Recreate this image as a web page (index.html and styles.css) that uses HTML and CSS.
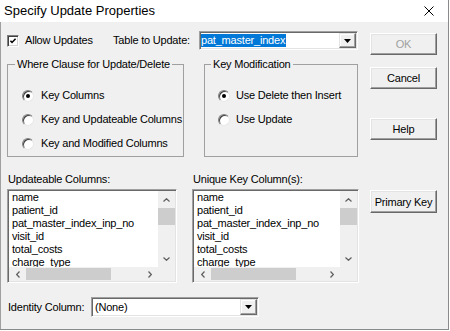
FILE: index.html
```html
<!DOCTYPE html>
<html>
<head>
<meta charset="utf-8">
<link rel="stylesheet" href="styles.css">
</head>
<body>
<div class="window">
  <div class="titlebar">
    <span class="title">Specify Update Properties</span>
    <svg class="close" viewBox="0 0 10 10"><path d="M0.5 0.5 L9.5 9.5 M9.5 0.5 L0.5 9.5" stroke="#000" stroke-width="1" fill="none"/></svg>
  </div>
  <div class="client">
    <div class="main">
      <div class="row1">
        <label class="check">
          <span class="cbox"><svg viewBox="0 0 10 10"><polyline points="1.8,4.6 3.8,6.8 8.2,2.2" stroke="#000" stroke-width="1.9" fill="none"/></svg></span>
          <span>Allow Updates</span>
        </label>
        <span class="tbl-lbl">Table to Update:</span>
        <div class="combo combo-table">
          <span class="combo-text"><span class="sel">pat_master_index</span></span>
          <span class="dd-btn"><svg viewBox="0 0 7 4"><polygon points="0,0 7,0 3.5,4" fill="#000"/></svg></span>
        </div>
      </div>

      <div class="groups">
        <fieldset class="group g1">
          <legend>Where Clause for Update/Delete</legend>
          <div class="radios">
            <div class="radio-row"><span class="radio on"></span><span>Key Columns</span></div>
            <div class="radio-row"><span class="radio"></span><span>Key and Updateable Columns</span></div>
            <div class="radio-row"><span class="radio"></span><span>Key and Modified Columns</span></div>
          </div>
        </fieldset>
        <fieldset class="group g2">
          <legend>Key Modification</legend>
          <div class="radios">
            <div class="radio-row"><span class="radio on"></span><span>Use Delete then Insert</span></div>
            <div class="radio-row"><span class="radio"></span><span>Use Update</span></div>
          </div>
        </fieldset>
      </div>

      <div class="lists">
        <div class="listcol l1">
          <div class="list-lbl">Updateable Columns:</div>
          <div class="listbox">
            <div class="items">
              <div>name</div><div>patient_id</div><div>pat_master_index_inp_no</div><div>visit_id</div><div>total_costs</div><div>charge_type</div>
            </div>
            <div class="vscroll">
              <span class="sbtn"><svg viewBox="0 0 7 4"><polyline points="0.5,3.5 3.5,0.7 6.5,3.5" stroke="#606060" stroke-width="1.2" fill="none"/></svg></span>
              <span class="vthumb"></span>
              <span class="vtrack"></span>
              <span class="sbtn"><svg viewBox="0 0 7 4"><polyline points="0.5,0.5 3.5,3.3 6.5,0.5" stroke="#606060" stroke-width="1.2" fill="none"/></svg></span>
            </div>
            <div class="hscroll">
              <span class="sbtn"><svg viewBox="0 0 4 7"><polyline points="3.5,0.5 0.7,3.5 3.5,6.5" stroke="#606060" stroke-width="1.2" fill="none"/></svg></span>
              <span class="hthumb"></span>
              <span class="htrack"></span>
              <span class="sbtn"><svg viewBox="0 0 4 7"><polyline points="0.5,0.5 3.3,3.5 0.5,6.5" stroke="#606060" stroke-width="1.2" fill="none"/></svg></span>
            </div>
            <div class="corner"></div>
          </div>
        </div>
        <div class="listcol l2">
          <div class="list-lbl">Unique Key Column(s):</div>
          <div class="listbox">
            <div class="items">
              <div>name</div><div>patient_id</div><div>pat_master_index_inp_no</div><div>visit_id</div><div>total_costs</div><div>charge_type</div>
            </div>
            <div class="vscroll">
              <span class="sbtn"><svg viewBox="0 0 7 4"><polyline points="0.5,3.5 3.5,0.7 6.5,3.5" stroke="#606060" stroke-width="1.2" fill="none"/></svg></span>
              <span class="vthumb"></span>
              <span class="vtrack"></span>
              <span class="sbtn"><svg viewBox="0 0 7 4"><polyline points="0.5,0.5 3.5,3.3 6.5,0.5" stroke="#606060" stroke-width="1.2" fill="none"/></svg></span>
            </div>
            <div class="hscroll">
              <span class="sbtn"><svg viewBox="0 0 4 7"><polyline points="3.5,0.5 0.7,3.5 3.5,6.5" stroke="#606060" stroke-width="1.2" fill="none"/></svg></span>
              <span class="hthumb"></span>
              <span class="htrack"></span>
              <span class="sbtn"><svg viewBox="0 0 4 7"><polyline points="0.5,0.5 3.3,3.5 0.5,6.5" stroke="#606060" stroke-width="1.2" fill="none"/></svg></span>
            </div>
            <div class="corner"></div>
          </div>
        </div>
      </div>

      <div class="identity">
        <span class="id-lbl">Identity Column:</span>
        <div class="combo combo-id">
          <span class="combo-text"><span class="plain">(None)</span></span>
          <span class="dd-btn"><svg viewBox="0 0 7 4"><polygon points="0,0 7,0 3.5,4" fill="#000"/></svg></span>
        </div>
      </div>
    </div>

    <div class="side">
      <button class="btn btn-ok" disabled>OK</button>
      <button class="btn btn-cancel">Cancel</button>
      <button class="btn btn-help">Help</button>
      <button class="btn btn-pk">Primary Key</button>
    </div>
  </div>
</div>
</body>
</html>
```

FILE: styles.css
```css
* { box-sizing: border-box; }
html, body { margin: 0; padding: 0; }
body {
  width: 450px;
  height: 331px;
  overflow: hidden;
  background: #ffffff;
  font-family: "Liberation Sans", Arial, sans-serif;
  font-size: 11px;
  letter-spacing: -0.2px;
  line-height: 13px;
  color: #000;
  white-space: nowrap;
}
.window {
  width: 449px;
  height: 330px;
  border-right: 1px solid #8a8a8a;
  border-bottom: 1px solid #8a8a8a;
  background: #f0f0f0;
  display: flex;
  flex-direction: column;
}
.titlebar {
  flex: none;
  height: 22px;
  background: #ffffff;
  display: flex;
  align-items: center;
  justify-content: space-between;
  padding-left: 4px;
  padding-right: 14px;
}
.title {
  font-size: 13px;
  letter-spacing: 0;
  line-height: 20px;
}
.close { width: 10px; height: 10px; display: block; }

.client {
  flex: 1;
  display: flex;
  border-left: 1px solid #a0a0a0;
  padding-left: 6px;
}
.main {
  width: 352px;
  display: flex;
  flex-direction: column;
}
.side {
  width: 67px;
  margin-left: 11px;
  padding-top: 11px;
  display: flex;
  flex-direction: column;
}

/* top row */
.row1 {
  margin-top: 9px;
  height: 19px;
  display: flex;
  align-items: center;
}
.check {
  width: 106px;
  display: flex;
  align-items: center;
  gap: 6px;
}
.cbox {
  width: 12px;
  height: 12px;
  background: #fff;
  border: 1px solid;
  border-color: #808080 #ffffff #ffffff #808080;
  box-shadow: inset 1px 1px 0 #404040, inset -1px -1px 0 #d4d4d4;
  display: flex;
  align-items: center;
  justify-content: center;
}
.cbox svg { width: 8px; height: 8px; display: block; }
.tbl-lbl { width: 86px; }

.combo {
  height: 19px;
  background: #fff;
  border: 1px solid;
  border-color: #a0a0a0 #ffffff #ffffff #a0a0a0;
  box-shadow: inset 1px 1px 0 #696969, inset -1px -1px 0 #e3e3e3;
  padding: 1px;
  display: flex;
  align-items: stretch;
}
.combo-table { width: 159px; }
.combo-text {
  flex: 1;
  display: flex;
  align-items: center;
  overflow: hidden;
}
.sel {
  background: #0078d7;
  color: #fff;
  padding: 0 1px 0 0;
  line-height: 13px;
}
.plain { padding-left: 2px; }
.dd-btn {
  width: 17px;
  background: #f0f0f0;
  border: 1px solid;
  border-color: #e3e3e3 #696969 #696969 #e3e3e3;
  box-shadow: inset -1px -1px 0 #a0a0a0, inset 1px 1px 0 #ffffff;
  display: flex;
  align-items: center;
  justify-content: center;
}
.dd-btn svg { width: 7px; height: 4px; display: block; }

/* group boxes */
.groups {
  margin-top: 8px;
  display: flex;
  gap: 20px;
}
.group {
  margin: 0;
  padding: 0;
  height: 99px;
  border: 1px solid #a0a0a0;
  min-inline-size: 0;
}
.g1 { width: 177px; }
.g2 { width: 154px; }
.group legend {
  padding: 0 2px;
  margin: 0 auto 0 7px;
  line-height: 13px;
}
.g2 legend { margin-left: 6px; }
.radios {
  padding-top: 18px;
  padding-left: 14px;
  display: flex;
  flex-direction: column;
  gap: 11px;
}
.g2 .radios { padding-left: 13px; }
.radio-row {
  display: flex;
  align-items: center;
  gap: 7px;
  height: 13px;
}
.g2 .radio-row { gap: 6px; }
.radio {
  width: 12px;
  height: 12px;
  border-radius: 50%;
  background: #fff;
  border: 1px solid;
  border-color: #808080 #e8e8e8 #e8e8e8 #808080;
  box-shadow: inset 1px 1px 0 #404040;
  position: relative;
  flex: none;
}
.radio.on::after {
  content: "";
  position: absolute;
  left: 3px;
  top: 3px;
  width: 4px;
  height: 4px;
  border-radius: 50%;
  background: #000;
}

/* lists */
.lists {
  margin-top: 16px;
  display: flex;
  gap: 15px;
}
.l1 { width: 170px; }
.l2 { width: 167px; }
.list-lbl {
  line-height: 13px;
  padding-left: 1px;
  margin-bottom: 3px;
}
.listbox {
  height: 94px;
  border: 1px solid;
  border-color: #a0a0a0 #ffffff #ffffff #a0a0a0;
  box-shadow: inset 1px 1px 0 #696969, inset -1px -1px 0 #e3e3e3;
  padding: 1px;
  display: grid;
  grid-template-columns: 1fr 17px;
  grid-template-rows: 76px 14px;
}
.items {
  background: #fff;
  overflow: hidden;
  padding-left: 3px;
  line-height: 13px;
}
.vscroll {
  background: #f0f0f0;
  display: flex;
  flex-direction: column;
}
.hscroll {
  background: #f0f0f0;
  display: flex;
}
.corner { background: #f0f0f0; }
.sbtn {
  flex: none;
  width: 17px;
  height: 17px;
  display: flex;
  align-items: center;
  justify-content: center;
}
.hscroll .sbtn { height: 14px; }
.vscroll .sbtn svg { width: 7px; height: 4px; display: block; }
.hscroll .sbtn svg { width: 4px; height: 7px; display: block; }
.vthumb { flex: none; height: 17px; background: #cdcdcd; }
.vtrack { flex: 1; }
.hthumb { flex: none; width: 85px; background: #cdcdcd; margin: 1px 0; }
.htrack { flex: 1; }

/* identity row */
.identity {
  margin-top: 14px;
  display: flex;
  align-items: center;
}
.id-lbl { width: 84px; padding-left: 1px; }
.combo-id { width: 168px; height: 20px; }

/* buttons */
.btn {
  width: 67px;
  height: 22px;
  margin: 0;
  padding: 0;
  font-family: inherit;
  font-size: 11px;
  letter-spacing: -0.2px;
  color: #000;
  background: #f0f0f0;
  border: 1px solid;
  border-color: #ffffff #696969 #696969 #ffffff;
  box-shadow: inset -1px -1px 0 #a0a0a0, inset 1px 1px 0 #e3e3e3;
  border-radius: 0;
}
.btn-ok { color: #a0a0a0; }
.btn-cancel { margin-top: 12px; }
.btn-help { margin-top: 29px; }
.btn-pk { margin-top: 50px; height: 23px; }
```
